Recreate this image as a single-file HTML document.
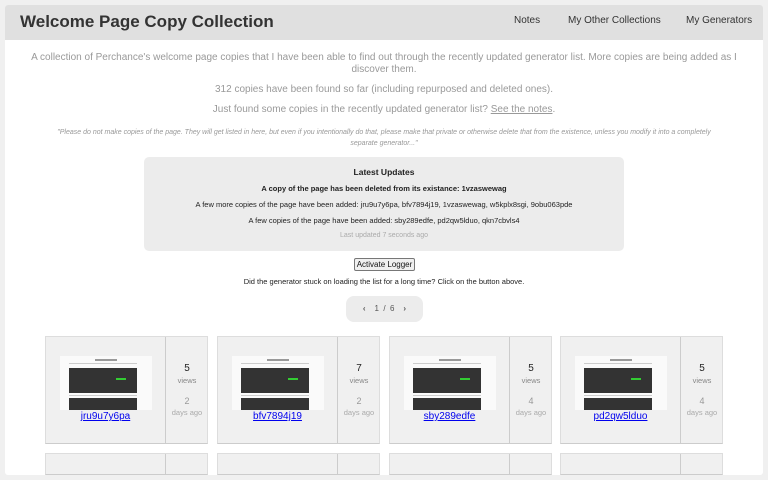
<!DOCTYPE html>
<html><head><meta charset="utf-8"><style>
*{box-sizing:border-box;margin:0;padding:0}
html,body{width:768px;height:480px;overflow:hidden}
body{background:#f0f0f0;font-family:"Liberation Sans",sans-serif;position:relative}
.wrap{position:absolute;left:5px;top:5px;width:758px;height:470px;background:#fff;border-radius:3px;overflow:hidden}
.hdr{height:35px;background:#e0e0e0;position:relative}
.hdr h1{position:absolute;left:15px;top:7px;font-size:17px;font-weight:bold;color:#333}
.nav{position:absolute;top:10px;font-size:10px;color:#333}
.c{text-align:center;color:#999;position:absolute;left:0;width:758px}
.box{position:absolute;left:139px;top:152px;width:480px;height:94px;background:#ececec;border-radius:5px;text-align:center;font-size:7.5px;color:#222}
.box p{position:absolute;left:0;width:480px}
.btn{position:absolute;left:349px;top:253px;width:61px;height:13px;border:1px solid #777;background:#f0f0f0;border-radius:2px;font-size:8px;text-align:center;line-height:11px;color:#111}
.pg{position:absolute;left:341px;top:291px;width:77px;height:26px;background:#ececec;border-radius:8px;font-size:8px;color:#555;text-align:center;line-height:26px}
.card{position:absolute;width:163px;height:108px;background:#f0f0f0;border:1px solid #ddd;border-bottom:1px solid #ccc}
.card .div{position:absolute;left:119px;top:0;bottom:0;border-left:1px solid #ccc}
.th{position:absolute;left:14px;top:19px;width:92px;height:54px;background:#fafafa}
.d1{position:absolute;left:9px;top:12px;width:68px;height:25px;background:#333}
.g{position:absolute;left:56px;top:22px;width:10px;height:2px;background:#3c3}
.d2{position:absolute;left:9px;top:42px;width:68px;height:12px;background:#333}
.t1{position:absolute;left:35px;top:3px;width:22px;height:2px;background:#999}
.ln{position:absolute;left:9px;height:1px;background:#ccc;width:68px}
.nm{position:absolute;left:0;width:119px;top:74px;text-align:center;font-size:10px;color:#00e;text-decoration:underline}
.st{position:absolute;left:120px;width:42px;text-align:center}
</style></head><body>
<div class="wrap">
<div class="hdr"><h1>Welcome Page Copy Collection</h1>
<span class="nav" style="left:509px">Notes</span>
<span class="nav" style="left:563px">My Other Collections</span>
<span class="nav" style="left:681px">My Generators</span></div>
<div class="c" style="top:47px;font-size:10px;line-height:12px;padding:0 8px">A collection of Perchance's welcome page copies that I have been able to find out through the recently updated generator list. More copies are being added as I discover them.</div>
<div class="c" style="top:79px;font-size:10px">312 copies have been found so far (including repurposed and deleted ones).</div>
<div class="c" style="top:99px;font-size:10px">Just found some copies in the recently updated generator list? <u>See the notes</u>.</div>
<div class="c" style="top:122px;font-size:7px;font-style:italic;line-height:11px;padding:0 38px">"Please do not make copies of the page. They will get listed in here, but even if you intentionally do that, please make that private or otherwise delete that from the existence, unless you modify it into a completely separate generator..."</div>
<div class="box">
<p style="top:10px;font-size:8.5px;font-weight:bold">Latest Updates</p>
<p style="top:27px;font-weight:bold;font-size:7.5px">A copy of the page has been deleted from its existance: 1vzaswewag</p>
<p style="top:43px">A few more copies of the page have been added: jru9u7y6pa, bfv7894j19, 1vzaswewag, w5kplx8sgi, 9obu063pde</p>
<p style="top:59px">A few copies of the page have been added: sby289edfe, pd2qw5lduo, qkn7cbvls4</p>
<p style="top:75px;color:#aaa;font-size:7px">Last updated 7 seconds ago</p>
</div>
<div class="btn">Activate Logger</div>
<div class="c" style="top:272px;font-size:7.5px;color:#222">Did the generator stuck on loading the list for a long time? Click on the button above.</div>
<div class="pg"><b>‹</b>&nbsp;&nbsp;&nbsp; 1 &nbsp;/&nbsp; 6 &nbsp;&nbsp;&nbsp;<b>›</b></div>

<div class="card" style="left:40px;top:331px"><div class="div"></div><div class="th"><div class="t1"></div><div class="ln" style="top:7px"></div><div class="d1"></div><div class="g"></div><div class="ln" style="top:39px"></div><div class="d2"></div></div><div class="nm">jru9u7y6pa</div><div class="st" style="top:26px;font-size:10px;color:#222">5</div><div class="st" style="top:39px;font-size:7.5px;color:#888">views</div><div class="st" style="top:59px;font-size:9px;color:#999">2</div><div class="st" style="top:71px;font-size:7.5px;color:#aaa">days ago</div></div>
<div class="card" style="left:212px;top:331px"><div class="div"></div><div class="th"><div class="t1"></div><div class="ln" style="top:7px"></div><div class="d1"></div><div class="g"></div><div class="ln" style="top:39px"></div><div class="d2"></div></div><div class="nm">bfv7894j19</div><div class="st" style="top:26px;font-size:10px;color:#222">7</div><div class="st" style="top:39px;font-size:7.5px;color:#888">views</div><div class="st" style="top:59px;font-size:9px;color:#999">2</div><div class="st" style="top:71px;font-size:7.5px;color:#aaa">days ago</div></div>
<div class="card" style="left:384px;top:331px"><div class="div"></div><div class="th"><div class="t1"></div><div class="ln" style="top:7px"></div><div class="d1"></div><div class="g"></div><div class="ln" style="top:39px"></div><div class="d2"></div></div><div class="nm">sby289edfe</div><div class="st" style="top:26px;font-size:10px;color:#222">5</div><div class="st" style="top:39px;font-size:7.5px;color:#888">views</div><div class="st" style="top:59px;font-size:9px;color:#999">4</div><div class="st" style="top:71px;font-size:7.5px;color:#aaa">days ago</div></div>
<div class="card" style="left:555px;top:331px"><div class="div"></div><div class="th"><div class="t1"></div><div class="ln" style="top:7px"></div><div class="d1"></div><div class="g"></div><div class="ln" style="top:39px"></div><div class="d2"></div></div><div class="nm">pd2qw5lduo</div><div class="st" style="top:26px;font-size:10px;color:#222">5</div><div class="st" style="top:39px;font-size:7.5px;color:#888">views</div><div class="st" style="top:59px;font-size:9px;color:#999">4</div><div class="st" style="top:71px;font-size:7.5px;color:#aaa">days ago</div></div>

<div class="card" style="left:40px;top:448px;height:22px"><div class="div"></div></div>
<div class="card" style="left:212px;top:448px;height:22px"><div class="div"></div></div>
<div class="card" style="left:384px;top:448px;height:22px"><div class="div"></div></div>
<div class="card" style="left:555px;top:448px;height:22px"><div class="div"></div></div>
</div>
</body></html>
